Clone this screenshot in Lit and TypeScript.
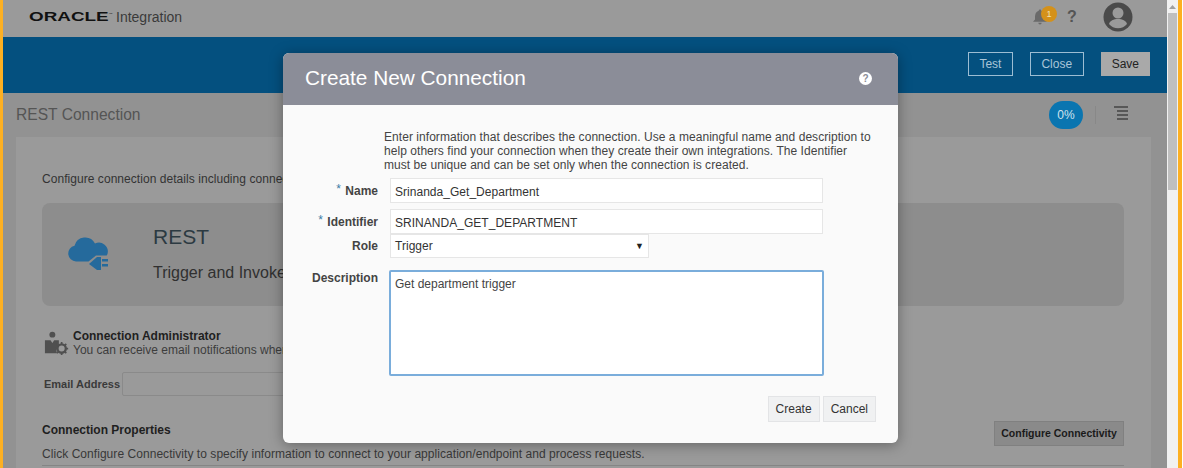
import { LitElement, html, css } from "lit";
import { customElement } from "lit/decorators.js";

@customElement("app-root")
export class AppRoot extends LitElement {
  static styles = css`
    :host { display: block; width: 1183px; height: 468px; overflow: hidden; position: relative; font-family: "Liberation Sans", Arial, sans-serif; background: #fff; }
    * { box-sizing: border-box; }
    .frame { display: flex; height: 468px; width: 1182px; border-left: 3px solid #fdb022; border-right: 4px solid #fdb022; }
    .page { position: relative; flex: 1; min-width: 0; height: 468px; overflow: hidden; background: #929292; }
    .scrollbar { width: 11px; background: #f1f1f1; display: flex; flex-direction: column; align-items: center; }
    .arrow { height: 13px; display: flex; align-items: center; justify-content: center; }
    .thumb { width: 9px; height: 177px; background: #bfbfbf; }
    .topbar { height: 37px; background: #9a9a9a; display: flex; align-items: center; padding: 0 34px 3px 26px; }
    .logo { display: inline-block; width: 80px; height: 12px; margin-right: 7px; line-height: 12px; font-size: 13px; font-weight: 700; color: #111; white-space: nowrap; }
    .logo span { display: inline-block; transform: scaleX(1.45); transform-origin: left center; }
    .logo sup { font-size: 3px; font-weight: 400; line-height: 0; vertical-align: 6px; }
    .product { font-size: 14px; color: #3a3a3a; }
    .spacer { flex: 1; }
    .bell { position: relative; width: 30px; height: 24px; margin-right: 5px; }
    .badge { position: absolute; left: 9px; top: 1px; width: 16px; height: 16px; border-radius: 50%; background: #d4911a; color: #f0e0b0; font-size: 9px; line-height: 16px; text-align: center; }
    .help { font-size: 16px; font-weight: 700; color: #555; width: 36px; }
    .bluebar { height: 56px; background: #04507f; display: flex; align-items: center; justify-content: flex-end; gap: 17px; padding-right: 17px; padding-bottom: 2px; }
    .tb { height: 24px; padding: 0 10.500px; border: 1px solid #9dbdd3; color: #a9c5d8; font-size: 12px; line-height: 22px; }
    .tb.save { background: #a9a9a9; color: #222; border-color: #a9a9a9; padding: 0 10px; }
    .titlebar { height: 44px; display: flex; align-items: center; padding: 0 39px 0 13px; }
    .pagetitle { font-size: 15.600px; color: #555; flex: 1; }
    .pct { width: 34px; height: 28px; border-radius: 14px; background: #0a75b0; color: #cfe3ee; font-size: 12px; line-height: 28px; text-align: center; }
    .sep { width: 1px; height: 18px; background: #888; margin: 0 18px 0 12px; }
    .menu { margin-bottom: 4px; }
    .content { margin: 0 16px 0 13px; background: #9a9a9a; height: 340px; padding: 35px 27px 0 26px; }
    .cfg { font-size: 12px; color: #333; height: 31px; letter-spacing: .05px; white-space: nowrap; }
    .card { height: 103px; border-radius: 8px; background: #8d8d8d; display: flex; margin-bottom: 24px; }
    .cardicon { width: 111px; padding: 34px 0 0 26px; }
    .cardtext { padding-top: 21px; }
    .cardtext h2 { margin: 0 0 15px; font-weight: 400; font-size: 21px; line-height: 25px; color: #2c3a42; }
    .cardtext p { margin: 0; font-size: 16px; line-height: 18px; color: #303030; white-space: nowrap; }
    .admin { display: flex; gap: 3px; height: 39px; margin-left: 2px; }
    .admin svg { flex: none; }
    .admin b { display: block; font-size: 12px; line-height: 13px; color: #1f1f1f; }
    .admin div div { font-size: 12px; line-height: 14px; color: #3d3d3d; white-space: nowrap; }
    .email { display: flex; align-items: center; gap: 2px; margin-top: 3px; margin-left: 2px; }
    .email label { font-size: 11px; font-weight: 700; color: #3a3a3a; }
    .email i { display: block; width: 300px; height: 24px; border: 1px solid #8a8a8a; border-radius: 2px; background: #9a9a9a; }
    .propsrow { display: flex; justify-content: space-between; margin-top: 25px; height: 25px; align-items: flex-start; }
    .propsrow b { font-size: 12px; color: #1f1f1f; margin-top: 2px; line-height: 14px; }
    .conf { height: 25px; width: 130px; text-align: center; background: #8a8a8a; border: 1px solid #808080; font-size: 10.500px; font-weight: 700; color: #1a1a1a; line-height: 23px; }
    .click { font-size: 12px; color: #383838; margin-top: 1px; line-height: 14px; white-space: nowrap; letter-spacing: .05px; }
    .rule { height: 1px; background: #858585; margin-top: 4px; }
    .dialog { position: absolute; left: 280px; top: 53px; width: 615px; height: 390px; border-radius: 6px; background: #fafafa; box-shadow: 0 2px 14px rgba(0, 0, 0, .35); display: flex; flex-direction: column; overflow: hidden; }
    .dhead { height: 52px; background: #8b8d98; display: flex; align-items: center; justify-content: space-between; padding: 0 26px 2px 22px; color: #fff; }
    .dhead h1 { margin: 0; font-weight: 400; font-size: 20.800px; }
    .dbody { padding: 25px 22px 0 0; flex: 1; display: flex; flex-direction: column; }
    .intro { margin: 0 0 6px 101px; font-size: 12px; line-height: 14px; color: #444; width: 490px; letter-spacing: .05px; }
    .form { display: grid; grid-template-columns: 95px 1fr; column-gap: 12px; }
    .lab { font-size: 12px; font-weight: 700; color: #444; text-align: right; line-height: 26px; height: 25px; }
    .lab sup { color: #3a7ca5; font-weight: 400; font-size: 12px; line-height: 0; vertical-align: 2px; margin-right: 1px; }
    .inp { height: 25px; width: 433px; background: #fff; border: 1px solid #e6e6e6; font-size: 12px; color: #333; line-height: 26px; padding-left: 4px; letter-spacing: .03px; }
    .gap6 { margin-bottom: 6px; }
    .sel { height: 24px; width: 259px; display: flex; justify-content: space-between; padding-right: 4px; line-height: 23px; }
    .caret { font-size: 9px; color: #222; }
    .rolelab { line-height: 24px; height: 24px; margin-bottom: 12px; }
    .desc { margin-left: -1px; height: 106px; width: 435px; background: #fff; border: 2px solid #7aaddb; border-radius: 2px; padding: 5px 4px; font-size: 12px; color: #444; line-height: 15px; }
    .desclab { line-height: 16px; height: auto; }
    .actions { display: flex; justify-content: flex-end; gap: 3px; margin-top: 20px; }
    .btn { height: 26px; padding: 0 7px; background: #f0f1f2; border: 1px solid #e3e4e6; font-size: 12px; color: #333; line-height: 25px; }
  `;

  render() {
    return html`
      <div class="frame">
        <div class="page">
          <div class="topbar">
            <span class="logo"><span>ORACLE<sup>™</sup></span></span>
            <span class="product">Integration</span>
            <span class="spacer"></span>
            <span class="bell">
              <svg width="16" height="18" viewBox="0 0 16 18" style="position:absolute;left:0;top:3px"><path d="M8 1.500a1.300 1.300 0 0 1 1.300 1.300C12 3.600 13 6.200 13 9v2.500l2 2.300H1l2-2.300V9c0-2.800 1-5.400 3.700-6.200A1.300 1.300 0 0 1 8 1.500zM6.300 14.800h3.400a1.700 1.700 0 0 1-3.400 0z" fill="#6a6a6a"/></svg>
              <span class="badge">1</span>
            </span>
            <span class="help">?</span>
            <svg width="30" height="30" viewBox="0 0 30 30"><circle cx="15" cy="15" r="14.500" fill="#4a4a4a"/><circle cx="15" cy="11" r="5.500" fill="#9a9a9a"/><path d="M6 22c1-3.500 4.500-5 9-5s8 1.500 9 5c-2.200 2.800-5.500 4.300-9 4.300S8.200 24.800 6 22z" fill="#9a9a9a"/></svg>
          </div>
          <div class="bluebar">
            <span class="tb">Test</span><span class="tb">Close</span><span class="tb save">Save</span>
          </div>
          <div class="titlebar">
            <span class="pagetitle">REST Connection</span>
            <span class="pct">0%</span>
            <span class="sep"></span>
            <svg class="menu" width="14" height="14" viewBox="0 0 14 14"><path d="M0 1h14M3 5h11M3 9h11M3 13h11" stroke="#444" stroke-width="1.300"/></svg>
          </div>
          <div class="content">
            <div class="cfg">Configure connection details including connection</div>
            <div class="card">
              <div class="cardicon">
                <svg width="40" height="34" viewBox="0 0 40 34"><path d="M8 24.500a8 8 0 0 1-1.500-15.800A11 11 0 0 1 27 6.500a9 9 0 0 1 12.500 10.500c-.2.600-.5 1-.8 1.500H28l-7.500 6z" fill="#256a9c"/><path d="M21 27l8-7h4v13h-4z" fill="#256a9c"/><rect x="34" y="22" width="6" height="2.500" fill="#256a9c"/><rect x="34" y="27" width="6" height="2.500" fill="#256a9c"/></svg>
              </div>
              <div class="cardtext">
                <h2>REST</h2>
                <p>Trigger and Invoke</p>
              </div>
            </div>
            <div class="admin">
              <svg width="26" height="26" viewBox="0 0 28 28"><circle cx="9" cy="5" r="3.200" fill="#505050"/><path d="M1 11h6l2 3 2-3h5v6a7 7 0 0 0-2 8H1z" fill="#505050"/><circle cx="19" cy="20" r="4.500" fill="none" stroke="#505050" stroke-width="2.500"/><path d="M19 13v3M19 24v3M12 20h3M23 20h3M14 15l2 2M22 23l2 2M24 15l-2 2M16 23l-2 2" stroke="#505050" stroke-width="1.800"/></svg>
              <div><b>Connection Administrator</b><div>You can receive email notifications when</div></div>
            </div>
            <div class="email"><label>Email Address</label><i></i></div>
            <div class="propsrow"><b>Connection Properties</b><span class="conf">Configure Connectivity</span></div>
            <div class="click">Click Configure Connectivity to specify information to connect to your application/endpoint and process requests.</div>
            <div class="rule"></div>
          </div>
          <div class="dialog">
            <div class="dhead">
              <h1>Create New Connection</h1>
              <svg width="13" height="13" viewBox="0 0 13 13"><circle cx="6.500" cy="6.500" r="6.500" fill="#fff"/><text x="6.500" y="10" text-anchor="middle" font-size="10" font-weight="700" font-family="Liberation Sans" fill="#8b8d98">?</text></svg>
            </div>
            <div class="dbody">
              <p class="intro">Enter information that describes the connection. Use a meaningful name and description to help others find your connection when they create their own integrations. The Identifier must be unique and can be set only when the connection is created.</p>
              <div class="form">
                <div class="lab"><sup>*</sup> Name</div>
                <div class="inp gap6">Srinanda_Get_Department</div>
                <div class="lab"><sup>*</sup> Identifier</div>
                <div class="inp">SRINANDA_GET_DEPARTMENT</div>
                <div class="lab rolelab">Role</div>
                <div class="inp sel"><span>Trigger</span><span class="caret">▼</span></div>
                <div class="lab desclab">Description</div>
                <div class="desc">Get department trigger</div>
              </div>
              <div class="actions"><span class="btn">Create</span><span class="btn">Cancel</span></div>
            </div>
          </div>
        </div>
        <div class="scrollbar">
          <span class="arrow"><svg width="7" height="4" viewBox="0 0 7 4"><path d="M3.500 0L7 4H0z" fill="#a0a0a0"/></svg></span>
          <div class="thumb"></div>
        </div>
      </div>
    `;
  }
}
